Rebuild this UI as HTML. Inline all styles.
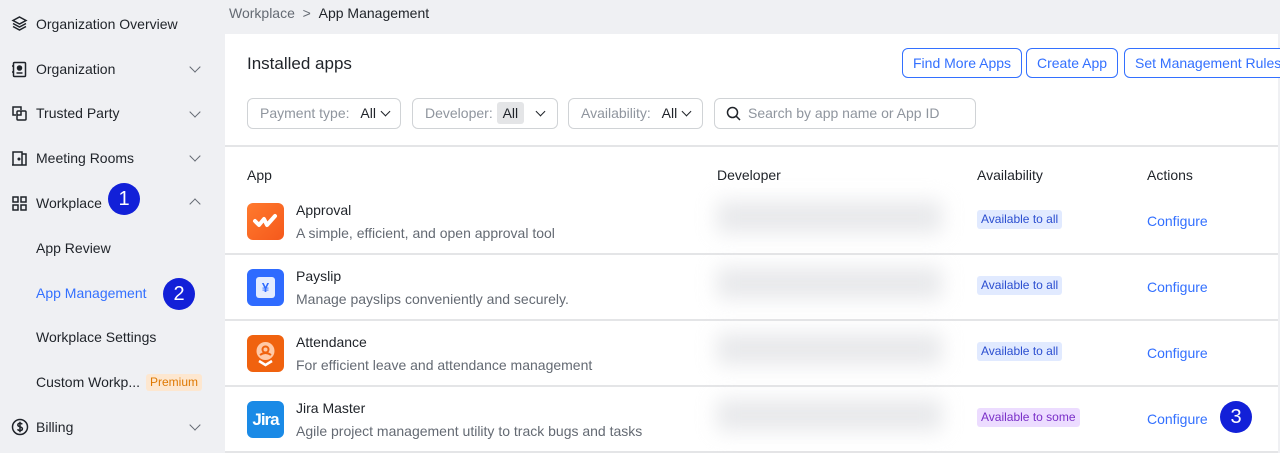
<!DOCTYPE html>
<html><head><meta charset="utf-8"><style>
*{box-sizing:border-box;margin:0;padding:0}
body{width:1280px;height:452px;overflow:hidden;background:#eff0f3;font-family:"Liberation Sans",sans-serif;color:#1f2329;position:relative}
.a{position:absolute}
.side div.it{position:absolute;left:36px;font-size:14px;line-height:20px;color:#1f2329}
.chev{position:absolute;left:191px;width:8px;height:8px;border-right:1.5px solid #646a73;border-bottom:1.5px solid #646a73;transform:rotate(45deg)}
.ic{position:absolute;left:11px}
.badge{position:absolute;width:32px;height:32px;border-radius:50%;background:#1220d8;color:#fff;font-size:20px;text-align:center;line-height:32px}
.main{position:absolute;left:225px;top:34px;width:1053px;height:418px;background:#fff}
.btn{position:absolute;height:30px;border:1px solid #3370ff;border-radius:6px;color:#3370ff;font-size:14px;line-height:28px;padding:0 10px;background:#fff;white-space:nowrap}
.sel{position:absolute;height:31px;border:1px solid #d0d3d6;border-radius:6px;font-size:14px;line-height:29px;color:#8f959e;padding-left:12px;background:#fff;white-space:nowrap}
.sel b{font-weight:normal;color:#1f2329}
.sc{position:absolute;width:7px;height:7px;border-right:1.5px solid #1f2329;border-bottom:1.5px solid #1f2329;transform:rotate(45deg);top:9px}
.row{position:absolute;left:225px;width:1053px;height:66px;border-bottom:2px solid #e4e5e7}
.logo{position:absolute;left:22px;top:14px;width:37px;height:37px;border-radius:6px}
.nm{position:absolute;left:71px;top:13px;font-size:14px;color:#1f2329}
.ds{position:absolute;left:71px;top:36px;font-size:14px;color:#646a73}
.blur{position:absolute;left:492px;top:12px;width:225px;height:32px;background:#e2e3e6;filter:blur(10px);opacity:.8}
.tag{position:absolute;left:752px;top:21px;height:19px;padding:0 4px;border-radius:3px;background:#e1eaff;color:#2b4ed0;font-size:12px;line-height:19px}
.cfg{position:absolute;left:922px;top:24px;font-size:14px;color:#3370ff}
</style></head><body>
<div class="side">
<svg class="ic" style="top:15px" width="17" height="17" viewBox="0 0 17 17" fill="none" stroke="#1f2329" stroke-width="1.5"><path d="M8.5 2 15 5.5 8.5 9 2 5.5Z"/><path d="M2 8.5 8.5 12 15 8.5M2 11.5 8.5 15 15 11.5"/></svg>
<div class="it" style="top:14px">Organization Overview</div>
<svg class="ic" style="top:61px" width="17" height="17" viewBox="0 0 17 17" fill="none" stroke="#1f2329" stroke-width="1.5"><rect x="2.5" y="1.5" width="12" height="14" rx="1"/><circle cx="8.5" cy="7" r="2" fill="#1f2329"/><path d="M5.5 12h6" /><path d="M1 5h2M1 11h2"/></svg>
<div class="it" style="top:59px">Organization</div><div class="chev" style="top:63px"></div>
<svg class="ic" style="top:105px" width="17" height="17" viewBox="0 0 17 17" fill="none" stroke="#1f2329" stroke-width="1.5"><path d="M10 5V2H2v8h3"/><rect x="6" y="6" width="9" height="9" rx="1"/><path d="M6 10h4V6"/></svg>
<div class="it" style="top:103px">Trusted Party</div><div class="chev" style="top:108px"></div>
<svg class="ic" style="top:150px" width="17" height="17" viewBox="0 0 17 17" fill="none" stroke="#1f2329" stroke-width="1.5"><path d="M2 15V2h9v13M11 4h4v11H1"/><circle cx="8" cy="9" r=".8" fill="#1f2329"/></svg>
<div class="it" style="top:148px">Meeting Rooms</div><div class="chev" style="top:152px"></div>
<svg class="ic" style="top:195px" width="17" height="17" viewBox="0 0 17 17" fill="none" stroke="#1f2329" stroke-width="1.5"><rect x="2" y="2" width="5" height="5"/><rect x="10" y="2" width="5" height="5"/><rect x="2" y="10" width="5" height="5"/><rect x="10" y="10" width="5" height="5"/></svg>
<div class="it" style="top:193px">Workplace</div><div class="chev" style="top:200px;transform:rotate(225deg)"></div>
<div class="badge" style="left:108px;top:183px">1</div>
<div class="it" style="top:238px">App Review</div>
<div class="it" style="top:283px;color:#3370ff">App Management</div>
<div class="badge" style="left:163px;top:278px">2</div>
<div class="it" style="top:327px">Workplace Settings</div>
<div class="it" style="top:372px">Custom Workp...</div>
<div class="a" style="left:146px;top:374px;height:17px;padding:0 4px;background:#fde7d0;color:#de7802;font-size:12px;line-height:17px;border-radius:3px">Premium</div>
<svg class="ic" style="top:418px" width="18" height="18" viewBox="0 0 18 18" fill="none" stroke="#1f2329" stroke-width="1.5"><circle cx="9" cy="9" r="7.5"/><path d="M11.3 6.3C10.8 5.6 10 5.3 9 5.3 7.7 5.3 6.8 6 6.8 7s.9 1.4 2.2 1.8 2.4.8 2.4 1.9-1 1.8-2.4 1.8c-1.1 0-2-.4-2.5-1.2M9 3.8v10.4"/></svg>
<div class="it" style="top:417px">Billing</div><div class="chev" style="top:421px"></div>
</div>
<div class="a" style="left:229px;top:5px;font-size:14px;color:#646a73">Workplace&nbsp; &gt; &nbsp;<span style="color:#1f2329">App Management</span></div>
<div class="main">
<div class="a" style="left:22px;top:20px;font-size:17px;color:#1f2329">Installed apps</div>
<div class="btn" style="left:677px;top:14px">Find More Apps</div>
<div class="btn" style="left:801px;top:14px">Create App</div>
<div class="btn" style="left:899px;top:14px;width:170px">Set Management Rules</div>
<div class="sel" style="left:22px;top:64px;width:154px">Payment type:&nbsp;&nbsp; <b>All</b><span class="sc" style="left:134px"></span></div>
<div class="sel" style="left:187px;top:64px;width:146px">Developer: <b style="background:#e4e5e7;padding:3px 6px;border-radius:3px">All</b><span class="sc" style="left:124px"></span></div>
<div class="sel" style="left:343px;top:64px;width:135px">Availability:&nbsp;&nbsp; <b>All</b><span class="sc" style="left:114px"></span></div>
<div class="sel" style="left:489px;top:64px;width:262px;padding-left:33px">Search by app name or App ID
<svg class="a" style="left:11px;top:7px" width="15" height="15" viewBox="0 0 15 15" fill="none" stroke="#1f2329" stroke-width="1.5"><circle cx="6.5" cy="6.5" r="5"/><path d="M10.3 10.3 14 14"/></svg></div>
<div class="a" style="left:0;top:111px;width:1053px;height:2px;background:#e4e5e7"></div>
<div class="a" style="left:22px;top:133px;font-size:14px;color:#1f2329">App</div>
<div class="a" style="left:492px;top:133px;font-size:14px;color:#1f2329">Developer</div>
<div class="a" style="left:752px;top:133px;font-size:14px;color:#1f2329">Availability</div>
<div class="a" style="left:922px;top:133px;font-size:14px;color:#1f2329">Actions</div>
</div>
<div class="row" style="top:189px">
<div class="logo" style="background:linear-gradient(135deg,#ff7a2e,#f5591c)"><svg width="37" height="37" viewBox="0 0 37 37" fill="none" stroke="#fff" stroke-width="4" stroke-linecap="round" stroke-linejoin="round"><path d="M8 18l4 4 5-6 3 6 8-9"/></svg></div>
<div class="nm">Approval</div><div class="ds">A simple, efficient, and open approval tool</div>
<div class="blur"></div><div class="tag">Available to all</div><div class="cfg">Configure</div></div>
<div class="row" style="top:255px">
<div class="logo" style="background:#2f6bff"><div class="a" style="left:9px;top:8px;width:19px;height:21px;background:#e4ecff;border-radius:3px;color:#2f6bff;font-size:13px;text-align:center;line-height:21px;font-weight:bold">¥</div></div>
<div class="nm">Payslip</div><div class="ds">Manage payslips conveniently and securely.</div>
<div class="blur"></div><div class="tag">Available to all</div><div class="cfg">Configure</div></div>
<div class="row" style="top:321px">
<div class="logo" style="background:#f0620f"><svg width="37" height="37" viewBox="0 0 37 37"><circle cx="18.5" cy="16" r="9" fill="#ffc9a8"/><circle cx="18.5" cy="14.5" r="3" fill="none" stroke="#f0620f" stroke-width="2"/><path d="M13 20q5.5-4 11 0" stroke="#f0620f" stroke-width="2" fill="none"/><path d="M12 26l6.5 4 6.5-4" stroke="#fff" stroke-width="2.5" fill="none"/></svg></div>
<div class="nm">Attendance</div><div class="ds">For efficient leave and attendance management</div>
<div class="blur"></div><div class="tag">Available to all</div><div class="cfg">Configure</div></div>
<div class="row" style="top:387px">
<div class="logo" style="background:#1a8ae6;color:#fff;font-size:17px;font-weight:bold;text-align:center;line-height:37px;letter-spacing:-1px">Jira</div>
<div class="nm">Jira Master</div><div class="ds">Agile project management utility to track bugs and tasks</div>
<div class="blur"></div><div class="tag" style="background:#ecdcff;color:#7a2fc8">Available to some</div><div class="cfg">Configure</div>
<div class="badge" style="left:995px;top:14px">3</div></div>
</body></html>
